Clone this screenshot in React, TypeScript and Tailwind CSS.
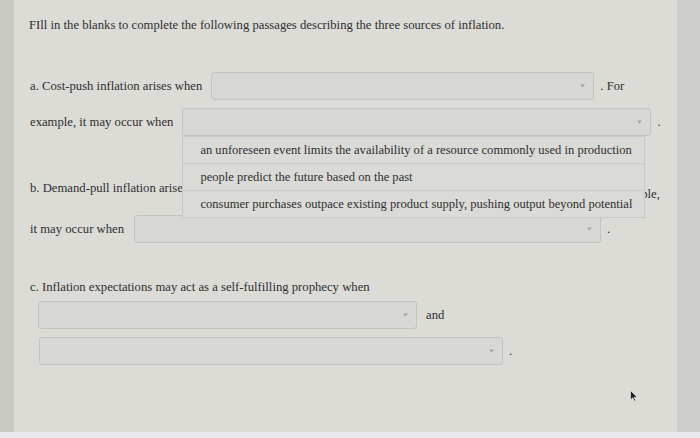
import React from 'react';

const serif = { fontFamily: '"Liberation Serif", "Times New Roman", serif' };

function Caret() {
  return (
    <svg width="5" height="4" viewBox="0 0 5 4" className="absolute right-[8px] top-1/2 -translate-y-1/2">
      <path d="M0 0.5 L5 0.5 L2.5 3.5 Z" fill="#a3a3a0" />
    </svg>
  );
}

function Blank({ width }: { width: string }) {
  return (
    <div className={`relative h-[28px] ${width} shrink-0 rounded-[3px] border border-[#c4c4c1] bg-[#d7d7d4]`}>
      <Caret />
    </div>
  );
}

const options = [
  'an unforeseen event limits the availability of a resource commonly used in production',
  'people predict the future based on the past',
  'consumer purchases outpace existing product supply, pushing output beyond potential',
];

export default function App(): React.JSX.Element {
  return (
    <div
      className="relative flex h-[438px] w-[700px] overflow-hidden bg-[#dcdbd6] text-[12.7px] leading-[16px] text-[#2f2f2f]"
      style={serif}
    >
      {/* left bezel strip */}
      <div className="w-[14px] shrink-0 bg-[#c9c9c4]" />

      <main className="flex-1 pl-[15px]">
        <p className="pt-[17px]">FIll in the blanks to complete the following passages describing the three sources of inflation.</p>

        {/* a */}
        <div className="mt-[39px] flex h-[28px] items-center gap-[6px] pl-[1px]">
          <span className="mr-[3px]">a. Cost-push inflation arises when</span>
          <Blank width="w-[383px]" />
          <span>. For</span>
        </div>

        <div className="mt-[8px] flex h-[28px] items-center gap-[6px] pl-[1px]">
          <span className="mr-[3px]">example, it may occur when</span>
          <div className="relative">
            <Blank width="w-[469px]" />
            {/* open dropdown list */}
            <ul className="absolute left-0 top-full z-10 w-[463px] border border-t-0 border-[#c9c9c6] bg-[#dadad7] text-[12.55px]">
              {options.map((o) => (
                <li key={o} className="flex h-[27px] items-center border-t border-[#cbcbc8] pl-[17px] whitespace-nowrap">
                  {o}
                </li>
              ))}
            </ul>
          </div>
          <span>.</span>
        </div>

        {/* b */}
        <div className="mt-[38px] flex h-[28px] items-center gap-[6px] whitespace-nowrap pl-[1px]">
          <span>b. Demand-pull inflation arises when</span>
          <Blank width="w-[356px]" />
          <span className="relative top-[6px]">. For example,</span>
        </div>

        <div className="mt-[13px] flex h-[28px] items-center gap-[6px] pl-[1px]">
          <span className="mr-[4px]">it may occur when</span>
          <Blank width="w-[467px]" />
          <span>.</span>
        </div>

        {/* c */}
        <p className="mt-[36px] pl-[1px]">c. Inflation expectations may act as a self-fulfilling prophecy when</p>

        <div className="mt-[6px] flex h-[28px] items-center gap-[9px] pl-[9px]">
          <Blank width="w-[379px]" />
          <span>and</span>
        </div>

        <div className="mt-[8px] flex h-[28px] items-center gap-[6px] pl-[10px]">
          <Blank width="w-[464px]" />
          <span>.</span>
        </div>
      </main>

      {/* right bezel strip */}
      <div className="w-[23px] shrink-0 bg-[#cdcdc9]" />

      {/* bottom light band */}
      <div className="absolute bottom-0 left-0 h-[6px] w-full bg-[#e9e9ec]" />

      {/* mouse pointer */}
      <svg width="8" height="12" viewBox="0 0 8 12" className="absolute left-[630px] top-[390px]">
        <path d="M0.5 0.5 L0.5 10 L2.8 7.8 L4.4 11.2 L5.6 10.6 L4.1 7.3 L7.2 7.3 Z" fill="#222" stroke="#f5f5f5" strokeWidth="0.6" />
      </svg>
    </div>
  );
}
